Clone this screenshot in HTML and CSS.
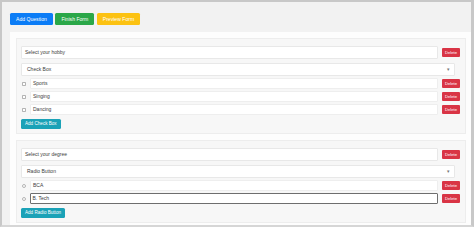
FILE: index.html
```html
<!DOCTYPE html>
<html>
<head>
<meta charset="utf-8">
<link rel="stylesheet" href="styles.css">
</head>
<body>
<div class="frame">
  <div class="toolbar">
    <div class="btn btn-blue">Add Question</div>
    <div class="btn btn-green">Finish Form</div>
    <div class="btn btn-yellow">Preview Form</div>
  </div>
  <div class="container">
    <div class="card">
      <div class="row">
        <div class="field field-q">Select your hobby</div>
        <div class="del">Delete</div>
      </div>
      <div class="select">Check Box<span class="arrow">▾</span></div>
      <div class="options">
        <div class="opt">
          <span class="check"></span>
          <div class="field field-opt">Sports</div>
          <div class="del">Delete</div>
        </div>
        <div class="opt">
          <span class="check"></span>
          <div class="field field-opt">Singing</div>
          <div class="del">Delete</div>
        </div>
        <div class="opt">
          <span class="check"></span>
          <div class="field field-opt">Dancing</div>
          <div class="del">Delete</div>
        </div>
      </div>
      <div class="btn btn-teal btn-add">Add Check Box</div>
    </div>
    <div class="card card-2">
      <div class="row">
        <div class="field field-q">Select your degree</div>
        <div class="del">Delete</div>
      </div>
      <div class="select">Radio Button<span class="arrow">▾</span></div>
      <div class="options">
        <div class="opt">
          <span class="radio"></span>
          <div class="field field-opt">BCA</div>
          <div class="del">Delete</div>
        </div>
        <div class="opt">
          <span class="radio"></span>
          <div class="field field-opt field-focus">B. Tech</div>
          <div class="del">Delete</div>
        </div>
      </div>
      <div class="btn btn-teal btn-add">Add Radio Button</div>
    </div>
  </div>
</div>
</body>
</html>
```
FILE: styles.css
```css
html, body {
  margin: 0;
  padding: 0;
  background: #f2f2f2;
}
.frame {
  width: 474px;
  height: 227px;
  box-sizing: border-box;
  border-top: 2px solid #c8c8c8;
  border-left: 2px solid #c8c8c8;
  border-right: 3px solid #c8c8c8;
  border-bottom: 2px solid #d6d6d6;
  background: #f2f2f2;
  padding: 11px 0 0 8px;
  display: flex;
  flex-direction: column;
  overflow: hidden;
  font-family: "Liberation Sans", Arial, sans-serif;
}
.toolbar {
  display: flex;
  gap: 2.5px;
  height: 12px;
  margin-bottom: 7px;
}
.btn {
  height: 12px;
  box-sizing: border-box;
  padding: 0 6px;
  font-size: 5.1px;
  line-height: 12px;
  color: #fff;
  border-radius: 1.5px;
  white-space: nowrap;
}
.btn-blue { background: #0b7cf6; }
.btn-green { background: #2aa748; }
.btn-yellow { background: #fcc212; }
.btn-teal { background: #1ba2b7; }
.container {
  flex: 1;
  background: #fdfdfd;
  padding: 6px 5px 0 6px;
}
.card {
  background: #f7f7f7;
  border: 1px solid #ededed;
  padding: 7px 5px 4px 4px;
}
.card-2 {
  margin-top: 6px;
}
.row {
  display: flex;
  align-items: center;
  gap: 4px;
  height: 13px;
}
.field {
  box-sizing: border-box;
  background: #fff;
  border: 1px solid #e8e8e8;
  border-radius: 1px;
  color: #3c3c3c;
  font-size: 5px;
  white-space: nowrap;
}
.field-q {
  width: 417px;
  height: 13px;
  line-height: 11px;
  padding-left: 3px;
}
.select {
  position: relative;
  box-sizing: border-box;
  width: 434px;
  height: 13px;
  margin-top: 3.5px;
  background: #fff;
  border: 1px solid #e8e8e8;
  border-radius: 1px;
  color: #3c3c3c;
  font-size: 5px;
  line-height: 11px;
  padding-left: 5px;
}
.arrow {
  position: absolute;
  right: 4px;
  top: 0;
  font-size: 5px;
  color: #777;
}
.options {
  margin-top: 2.5px;
  display: flex;
  flex-direction: column;
  gap: 2px;
}
.opt {
  display: flex;
  align-items: center;
  height: 11px;
}
.check, .radio {
  width: 4px;
  height: 4px;
  box-sizing: border-box;
  border: 0.6px solid #b4b4b4;
  background: #fff;
  margin-left: 1px;
  margin-right: 4px;
}
.check { border-radius: 0.8px; }
.radio { border-radius: 50%; }
.field-opt {
  width: 408px;
  height: 11px;
  line-height: 9px;
  padding-left: 2px;
  margin-right: 4px;
  border-color: #eeeeee;
}
.field-focus {
  border-color: #6e6e6e;
  padding-left: 1.5px;
}
.del {
  width: 18px;
  height: 9px;
  box-sizing: border-box;
  background: #d93445;
  color: #fff;
  font-size: 4.2px;
  line-height: 9px;
  text-align: center;
  border-radius: 1px;
}
.btn-add {
  width: fit-content;
  height: 10px;
  line-height: 10px;
  font-size: 4.6px;
  padding: 0 4px;
  margin-top: 4px;
}
```
